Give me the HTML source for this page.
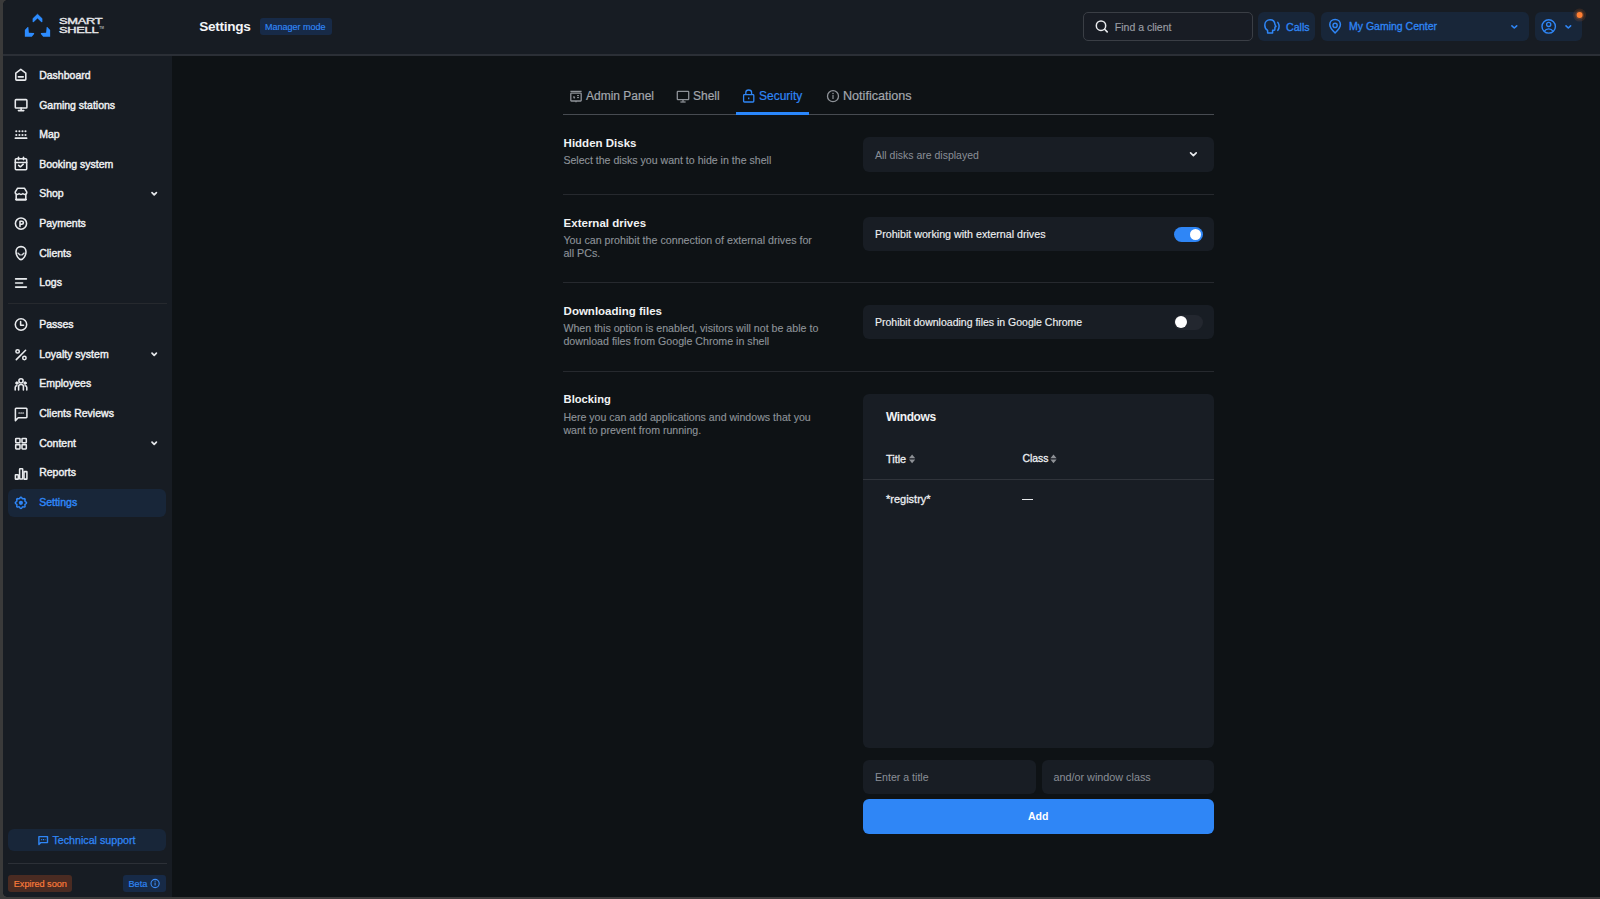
<!DOCTYPE html>
<html><head><meta charset="utf-8">
<style>
*{box-sizing:border-box;margin:0;padding:0}
html,body{width:1600px;height:899px;overflow:hidden;background:#3a3a3a;font-family:"Liberation Sans",sans-serif}
.a{position:absolute}
.t{position:absolute;white-space:nowrap;line-height:1}
svg{position:absolute;overflow:visible}
#app{left:3px;top:0;width:1597px;height:897px;background:#0e1215;border-radius:5px 0 0 5px;overflow:hidden}
#hdr{left:3px;top:0;width:1597px;height:54px;background:#171c23;border-top-left-radius:5px}
#hline{left:3px;top:54px;width:1597px;height:2px;background:#2b2f36}
#side{left:3px;top:56px;width:169px;height:841px;background:#171c23;border-bottom-left-radius:5px}
.nav{color:#eff1f3;font-size:10.5px;font-weight:400;-webkit-text-stroke:0.42px currentColor;left:39.2px}
.sb{-webkit-text-stroke:0.3px currentColor}
.sb2{-webkit-text-stroke:0.15px currentColor}
.sep{position:absolute;height:1px;background:#26292e}
.card{position:absolute;background:#181d24;border-radius:6px}
.h{color:#f1f2f4;font-weight:700;font-size:11.5px;left:563.6px}
.sub{color:#8d9299;font-size:10.6px;left:563.4px;line-height:12.9px;-webkit-text-stroke:0.12px currentColor}
.ct{color:#eef0f2;font-size:10.5px}
.ph{color:#8a8f97;font-size:10.6px}
.tab{color:#a3a7ad;font-size:12px;-webkit-text-stroke:0.2px currentColor}
</style></head>
<body>
<div id="app" class="a"></div>
<div id="hdr" class="a"></div>
<div id="hline" class="a"></div>
<div id="side" class="a"></div>

<!-- logo -->
<svg style="left:0;top:0" width="120" height="54" viewBox="0 0 120 54">
  <g fill="#2d8cff">
    <polygon points="32.8,18.5 37.5,13.9 42.2,18.5 42.2,21.9 41.4,21.9 37.5,18.2 33.6,21.9 32.8,21.9" stroke="#2d8cff" stroke-width="0.3" stroke-linejoin="round"/>
    <polygon points="24.85,29.9 27.7,27 28.3,27 28.9,32.7 34.1,33.1 34.1,33.9 31.8,36.8 24.85,36.8"/>
    <polygon points="50.15,29.9 47.3,27 46.7,27 46.1,32.7 40.9,33.1 40.9,33.9 43.2,36.8 50.15,36.8"/>
  </g>
</svg>
<div class="t" style="left:58.8px;top:15.9px;color:#e4e5e8;font-size:9.4px;font-weight:400;-webkit-text-stroke:0.4px currentColor;letter-spacing:-0.2px;transform:scaleX(1.37);transform-origin:0 0">SMART</div>
<div class="t" style="left:58.8px;top:25px;color:#e4e5e8;font-size:9.4px;font-weight:400;-webkit-text-stroke:0.4px currentColor;letter-spacing:-0.2px;transform:scaleX(1.37);transform-origin:0 0">SHELL</div>
<div class="t" style="left:99.3px;top:27.4px;color:#a6a8ac;font-size:3.2px;font-weight:700">TM</div>

<!-- header title -->
<div class="t" style="left:199.3px;top:20.1px;color:#f4f5f7;font-size:13.6px;font-weight:700;letter-spacing:-0.3px">Settings</div>
<div class="a" style="left:260px;top:18px;width:72px;height:17px;background:#172a47;border-radius:3px"></div>
<div class="t sb2" style="left:265px;top:22.6px;color:#3088f8;font-size:9px">Manager mode</div>

<!-- search -->
<div class="a" style="left:1083px;top:12px;width:170px;height:29px;border:1px solid #3a3e45;border-radius:5px;background:#181c24"></div>
<svg style="left:1090px;top:16px" width="24" height="20" viewBox="1090 16 24 20">
  <circle cx="1101" cy="25.7" r="4.7" fill="none" stroke="#e9ebee" stroke-width="1.5"/>
  <line x1="1104.6" y1="29.3" x2="1107.2" y2="31.9" stroke="#e9ebee" stroke-width="1.6" stroke-linecap="round"/>
</svg>
<div class="t sb2" style="left:1114.8px;top:21.5px;color:#9a9ea5;font-size:10.5px">Find a client</div>

<!-- calls -->
<div class="a" style="left:1258px;top:12.4px;width:57px;height:28.4px;background:#182639;border-radius:6px"></div>
<svg style="left:1260px;top:16px" width="24" height="20" viewBox="1260 16 24 20">
  <path d="M1267.6 33 V30.4 C1265.6 29.2 1264.8 27.3 1264.8 25.2 C1264.8 21.9 1267.1 19.8 1270.1 19.8 C1272.9 19.8 1274.7 21.9 1274.9 24.3 L1276 26.5 L1274.9 27.1 V29.2 C1274.9 29.9 1274.3 30.3 1273.6 30.3 H1272.6 V33 Z" fill="none" stroke="#2f86f6" stroke-width="1.5" stroke-linejoin="round"/>
  <path d="M1277.8 22.4 C1279.5 24.8 1279.5 27.8 1277.8 30.4" fill="none" stroke="#2f86f6" stroke-width="1.5" stroke-linecap="round"/>
</svg>
<div class="t sb" style="left:1286px;top:21.5px;color:#2f86f6;font-size:10.6px">Calls</div>

<!-- gaming center -->
<div class="a" style="left:1321px;top:12.4px;width:208px;height:28.4px;background:#182639;border-radius:6px"></div>
<svg style="left:1324px;top:14px" width="24" height="24" viewBox="1324 14 24 24">
  <path d="M1335.1 33 C1332.6 30.6 1329.8 28 1329.8 24.6 C1329.8 21.6 1332.2 19.4 1335.1 19.4 C1338 19.4 1340.4 21.6 1340.4 24.6 C1340.4 28 1337.6 30.6 1335.1 33 Z" fill="none" stroke="#2f86f6" stroke-width="1.5" stroke-linejoin="round"/>
  <circle cx="1335.1" cy="25.4" r="2.1" fill="none" stroke="#2f86f6" stroke-width="1.4"/>
</svg>
<div class="t sb" style="left:1349px;top:21.4px;color:#2f86f6;font-size:10.5px">My Gaming Center</div>
<svg style="left:1505px;top:20px" width="14" height="14" viewBox="1505 20 14 14">
  <polyline points="1511.9,25.8 1514.3,28 1516.7,25.8" fill="none" stroke="#2f86f6" stroke-width="1.6" stroke-linecap="round" stroke-linejoin="round"/>
</svg>

<!-- user -->
<div class="a" style="left:1535px;top:12.4px;width:47px;height:28.4px;background:#182639;border-radius:6px"></div>
<svg style="left:1536px;top:8px" width="54" height="30" viewBox="1536 8 54 30">
  <circle cx="1548.7" cy="26.4" r="6.7" fill="none" stroke="#2f86f6" stroke-width="1.4"/>
  <circle cx="1548.7" cy="24.4" r="2.1" fill="none" stroke="#2f86f6" stroke-width="1.3"/>
  <path d="M1544.2 31.4 C1545.5 29.6 1547 28.9 1548.7 28.9 C1550.4 28.9 1551.9 29.6 1553.2 31.4" fill="none" stroke="#2f86f6" stroke-width="1.4"/>
  <polyline points="1566,25.8 1568.3,28 1570.6,25.8" fill="none" stroke="#2f86f6" stroke-width="1.6" stroke-linecap="round" stroke-linejoin="round"/>
  <circle cx="1579.6" cy="15.1" r="6.5" fill="#ff7a2a" opacity="0.12"/><circle cx="1579.6" cy="15.1" r="4.5" fill="#ff7a2a" opacity="0.2"/>
  <circle cx="1579.6" cy="15.1" r="3" fill="#ff7f33"/>
</svg>

<!-- SIDEBAR -->
<div id="navtexts"></div>
<div class="t nav" style="top:70.0px">Dashboard</div>
<div class="t nav" style="top:99.6px">Gaming stations</div>
<div class="t nav" style="top:129.2px">Map</div>
<div class="t nav" style="top:158.8px">Booking system</div>
<div class="t nav" style="top:188.4px">Shop</div>
<div class="t nav" style="top:218.0px">Payments</div>
<div class="t nav" style="top:247.6px">Clients</div>
<div class="t nav" style="top:277.2px">Logs</div>
<div class="sep" style="left:8px;top:303px;width:159px"></div>
<div class="t nav" style="top:318.9px">Passes</div>
<div class="t nav" style="top:348.6px">Loyalty system</div>
<div class="t nav" style="top:378.3px">Employees</div>
<div class="t nav" style="top:408.0px">Clients Reviews</div>
<div class="t nav" style="top:437.7px">Content</div>
<div class="t nav" style="top:467.4px">Reports</div>
<div class="a" style="left:8px;top:489px;width:158px;height:28px;background:#182639;border-radius:6px"></div>
<div class="t nav" style="top:497.1px;color:#2f86f6">Settings</div>

<svg style="left:0;top:56px" width="172" height="480" viewBox="0 56 172 480">
  <g fill="none" stroke="#e9ebee" stroke-width="1.55" stroke-linejoin="round" stroke-linecap="round">
    <!-- dashboard -->
    <path d="M15.8 73.1 L20.8 69.4 L25.8 73.1 V79.2 C25.8 79.7 25.4 80.1 24.9 80.1 H16.7 C16.2 80.1 15.8 79.7 15.8 79.2 Z"/>
    <line x1="18.4" y1="76.8" x2="23.2" y2="76.8" stroke-width="1.7"/>
    <!-- monitor -->
    <rect x="15.3" y="99.6" width="11.6" height="8.4" rx="0.8"/>
    <line x1="21.1" y1="108" x2="21.1" y2="110.2"/>
    <line x1="18.4" y1="110.6" x2="23.8" y2="110.6"/>
    <!-- map -->
    <line x1="15.4" y1="138.2" x2="26.6" y2="138.2" stroke-width="1.7"/>
    <!-- booking -->
    <rect x="15.3" y="158.8" width="11.4" height="10.9" rx="1"/>
    <line x1="15.3" y1="162.4" x2="26.7" y2="162.4"/>
    <line x1="18.5" y1="157.2" x2="18.5" y2="159.6"/>
    <line x1="23.5" y1="157.2" x2="23.5" y2="159.6"/>
    <polyline points="18.6,165.3 20.4,166.8 23.3,164.2"/>
    <!-- shop -->
    <path d="M17.6 188.2 H24.4 L26.8 192.2 C26.8 193.6 25.9 194.4 24.7 194.4 C23.5 194.4 22.9 193.6 22.9 193.6 C22.9 193.6 22.3 194.4 21 194.4 C19.7 194.4 19.1 193.6 19.1 193.6 C19.1 193.6 18.5 194.4 17.3 194.4 C16.1 194.4 15.2 193.6 15.2 192.2 Z"/>
    <path d="M16.2 194.4 V199.6 H25.8 V194.4"/>
    <line x1="15.8" y1="199.6" x2="26.2" y2="199.6" stroke-width="1.6"/>
    <!-- payments -->
    <circle cx="21" cy="223.6" r="5.6"/>
    <path d="M20 226.6 V221.2 H21.8 C22.8 221.2 23.4 221.9 23.4 222.7 C23.4 223.5 22.8 224.2 21.8 224.2 H20"/>
    <!-- clients alien -->
    <path d="M21 246.6 C24 246.6 26 248.8 26 251.8 C26 255.6 23.2 259.6 21 259.6 C18.8 259.6 16 255.6 16 251.8 C16 248.8 18 246.6 21 246.6 Z"/>
    <path d="M18 253.2 C19.2 253.4 20.2 254.2 20.4 255.2 C19.2 255 18.2 254.2 18 253.2 Z" fill="#e6e8eb" stroke-width="0.9"/>
    <path d="M24 253.2 C22.8 253.4 21.8 254.2 21.6 255.2 C22.8 255 23.8 254.2 24 253.2 Z" fill="#e6e8eb" stroke-width="0.9"/>
    <!-- logs -->
    <line x1="15.6" y1="278.9" x2="26.4" y2="278.9" stroke-width="1.6"/>
    <line x1="15.6" y1="283" x2="22.6" y2="283" stroke-width="1.6"/>
    <line x1="15.6" y1="287.1" x2="26.4" y2="287.1" stroke-width="1.6"/>
    <!-- passes clock -->
    <circle cx="21" cy="324.5" r="5.7"/>
    <polyline points="20.6,321.4 20.6,325.3 23.5,325.3"/>
    <!-- loyalty % -->
    <circle cx="17.6" cy="351.4" r="1.7"/>
    <circle cx="24.4" cy="358" r="1.7"/>
    <line x1="16.3" y1="359.6" x2="25.6" y2="350.2"/>
    <!-- employees -->
    <circle cx="21" cy="380.8" r="2.1"/>
    <path d="M18.6 390 V386.6 C18.6 385.2 19.7 384.4 21 384.4 C22.3 384.4 23.4 385.2 23.4 386.6 V390"/>
    <circle cx="16.9" cy="383.1" r="1.3" fill="#e6e8eb" stroke-width="0.8"/>
    <circle cx="25.1" cy="383.1" r="1.3" fill="#e6e8eb" stroke-width="0.8"/>
    <path d="M15.2 390 V387.4 C15.2 386.4 15.9 385.8 16.9 385.8"/>
    <path d="M26.8 390 V387.4 C26.8 386.4 26.1 385.8 25.1 385.8"/>
    <!-- reviews -->
    <path d="M15.4 420.6 V409.1 C15.4 408.7 15.7 408.3 16.1 408.3 H26.2 C26.6 408.3 26.9 408.7 26.9 409.1 V417 C26.9 417.4 26.6 417.7 26.2 417.7 H18.2 Z"/>
    <line x1="18.8" y1="413" x2="23.6" y2="413" stroke-dasharray="0.9 1.1" stroke-width="1.1"/>
    <!-- content grid -->
    <rect x="15.7" y="438.5" width="4.3" height="4.3" rx="0.6"/>
    <rect x="22" y="438.5" width="4.3" height="4.3" rx="0.6"/>
    <rect x="15.7" y="444.6" width="4.3" height="4.3" rx="0.6"/>
    <rect x="22" y="444.6" width="4.3" height="4.3" rx="0.6"/>
    <!-- reports -->
    <rect x="15.4" y="474.7" width="2.9" height="4.4" rx="0.4"/>
    <rect x="19.6" y="468.8" width="3.1" height="10.3" rx="0.6"/>
    <rect x="24" y="471.6" width="2.9" height="7.5" rx="0.4"/>
  </g>
  <g fill="#e6e8eb">
    <circle cx="16.3" cy="131.3" r="1.05"/><circle cx="19.4" cy="131.3" r="1.05"/><circle cx="22.5" cy="131.3" r="1.05"/><circle cx="25.5" cy="131.3" r="1.05"/>
    <circle cx="16.3" cy="135" r="1.05"/><circle cx="19.4" cy="135" r="1.05"/><circle cx="22.5" cy="135" r="1.05"/><circle cx="25.5" cy="135" r="1.05"/>
  </g>
  <g fill="none" stroke="#e6e8eb" stroke-width="1.7" stroke-linecap="round" stroke-linejoin="round">
    <polyline points="152,192.7 154.2,194.9 156.4,192.7"/>
    <polyline points="152,353.2 154.2,355.4 156.4,353.2"/>
    <polyline points="152,442.2 154.2,444.4 156.4,442.2"/>
  </g>
  <!-- settings gear -->
  <g fill="none" stroke="#2f86f6" stroke-width="1.5">
    <path d="M20.90 497.20 L21.26 497.29 L21.59 497.55 L21.88 497.90 L22.12 498.26 L22.34 498.56 L22.58 498.73 L22.88 498.78 L23.25 498.73 L23.68 498.64 L24.13 498.60 L24.54 498.65 L24.86 498.84 L25.05 499.16 L25.10 499.57 L25.06 500.02 L24.97 500.45 L24.92 500.82 L24.97 501.12 L25.14 501.36 L25.44 501.58 L25.80 501.82 L26.15 502.11 L26.41 502.44 L26.50 502.80 L26.41 503.16 L26.15 503.49 L25.80 503.78 L25.44 504.02 L25.14 504.24 L24.97 504.48 L24.92 504.78 L24.97 505.15 L25.06 505.58 L25.10 506.03 L25.05 506.44 L24.86 506.76 L24.54 506.95 L24.13 507.00 L23.68 506.96 L23.25 506.87 L22.88 506.82 L22.58 506.87 L22.34 507.04 L22.12 507.34 L21.88 507.70 L21.59 508.05 L21.26 508.31 L20.90 508.40 L20.54 508.31 L20.21 508.05 L19.92 507.70 L19.68 507.34 L19.46 507.04 L19.22 506.87 L18.92 506.82 L18.55 506.87 L18.12 506.96 L17.67 507.00 L17.26 506.95 L16.94 506.76 L16.75 506.44 L16.70 506.03 L16.74 505.58 L16.83 505.15 L16.88 504.78 L16.83 504.48 L16.66 504.24 L16.36 504.02 L16.00 503.78 L15.65 503.49 L15.39 503.16 L15.30 502.80 L15.39 502.44 L15.65 502.11 L16.00 501.82 L16.36 501.58 L16.66 501.36 L16.83 501.12 L16.88 500.82 L16.83 500.45 L16.74 500.02 L16.70 499.57 L16.75 499.16 L16.94 498.84 L17.26 498.65 L17.67 498.60 L18.12 498.64 L18.55 498.73 L18.92 498.78 L19.22 498.73 L19.46 498.56 L19.68 498.26 L19.92 497.90 L20.21 497.55 L20.54 497.29 Z" stroke-linejoin="round"/>
    <circle cx="20.9" cy="502.8" r="2.1" fill="#2f86f6" stroke="none"/>
  </g>
</svg>

<!-- sidebar bottom -->
<div class="a" style="left:8px;top:829px;width:158px;height:22px;background:#182639;border-radius:6px"></div>
<svg style="left:36px;top:833px" width="14" height="14" viewBox="36 833 14 14">
  <path d="M38.9 844.6 V836.6 H47.5 V842.6 H40.9 Z" fill="none" stroke="#2f86f6" stroke-width="1.4" stroke-linejoin="round"/>
  <line x1="41.2" y1="839.6" x2="45.4" y2="839.6" stroke="#2f86f6" stroke-width="1.2" stroke-dasharray="1 0.8"/>
</svg>
<div class="t" style="left:52.4px;top:835px;color:#2f86f6;font-size:10.7px;-webkit-text-stroke:0.25px currentColor">Technical support</div>
<div class="sep" style="left:8px;top:863px;width:159px;background:#2c3037"></div>
<div class="a" style="left:8px;top:875px;width:64px;height:17px;background:#4a2b22;border-radius:3px"></div>
<div class="t sb2" style="left:13.8px;top:879.6px;color:#ff7d3b;font-size:9.2px;letter-spacing:-0.05px">Expired soon</div>
<div class="a" style="left:123px;top:875px;width:43px;height:17px;background:#172a47;border-radius:3px"></div>
<div class="t sb2" style="left:128.4px;top:879.6px;color:#3088f8;font-size:9.2px">Beta</div>
<svg style="left:148px;top:877px" width="14" height="14" viewBox="148 877 14 14">
  <circle cx="155.1" cy="883.5" r="4.1" fill="none" stroke="#3a8bf5" stroke-width="1.1"/>
  <line x1="155.1" y1="882.6" x2="155.1" y2="885.6" stroke="#3a8bf5" stroke-width="1.1"/>
  <circle cx="155.1" cy="881.2" r="0.6" fill="#3a8bf5"/>
</svg>

<!-- MAIN -->
<!-- tabs -->
<div class="sep" style="left:563px;top:114px;width:651px;height:1px;background:#474b51"></div>
<div class="a" style="left:736px;top:112px;width:73px;height:2.8px;background:#2a87fc"></div>
<svg style="left:560px;top:84px" width="360" height="24" viewBox="560 84 360 24">
  <g fill="none" stroke="#8e9298" stroke-width="1.3" stroke-linejoin="round">
    <line x1="570.4" y1="91.4" x2="581.6" y2="91.4"/>
    <rect x="570.8" y="93.2" width="10.4" height="7.8" rx="0.5"/>
    <line x1="573.6" y1="96.4" x2="574.6" y2="98.4" stroke-width="1.5"/>
    <line x1="577" y1="95.6" x2="579" y2="95.6" stroke-width="1"/>
    <line x1="577" y1="97.6" x2="579" y2="97.6" stroke-width="1"/>
    <line x1="576" y1="101" x2="576" y2="102.3"/>
    <rect x="677.3" y="91.3" width="11.4" height="8.4" rx="0.6"/>
    <line x1="683" y1="99.7" x2="683" y2="101.8"/>
    <line x1="680.4" y1="102" x2="685.6" y2="102"/>
    <circle cx="833" cy="96.2" r="5.5"/>
    <line x1="833" y1="95" x2="833" y2="99" stroke-width="1.2"/>
    <circle cx="833" cy="93.5" r="0.5" stroke-width="0.8"/>
  </g>
  <g fill="none" stroke="#2f86f6" stroke-width="1.3" stroke-linejoin="round">
    <rect x="743.6" y="94.6" width="10.2" height="7.4" rx="0.8"/>
    <path d="M745.8 94.6 V92.6 C745.8 91 747.1 90 748.7 90 C750.3 90 751.6 91 751.6 92.6 V94.6"/>
    <line x1="748.7" y1="97.6" x2="748.7" y2="99.2" stroke-width="1.4"/>
  </g>
</svg>
<div class="t tab" style="left:586px;top:90.2px">Admin Panel</div>
<div class="t tab" style="left:693px;top:90.2px">Shell</div>
<div class="t tab" style="left:759px;top:90.2px;color:#2f86f6">Security</div>
<div class="t tab" style="left:843px;top:90.2px;font-size:12.6px;top:89.8px">Notifications</div>

<!-- hidden disks -->
<div class="t h" style="top:137.8px">Hidden Disks</div>
<div class="t sub" style="top:153.8px">Select the disks you want to hide in the shell</div>
<div class="card" style="left:863px;top:137.2px;width:351px;height:34.5px"></div>
<div class="t ph" style="left:875px;top:149.8px;font-size:10.5px">All disks are displayed</div>
<svg style="left:1185px;top:148px" width="16" height="12" viewBox="1185 148 16 12">
  <polyline points="1190.6,152.9 1193.4,155.6 1196.2,152.9" fill="none" stroke="#e9ebee" stroke-width="1.7" stroke-linecap="round" stroke-linejoin="round"/>
</svg>
<div class="sep" style="left:563px;top:194px;width:651px"></div>

<!-- external drives -->
<div class="t h" style="top:217.5px">External drives</div>
<div class="t sub" style="top:233.7px;white-space:normal;width:260px;font-size:10.7px">You can prohibit the connection of external drives for all PCs.</div>
<div class="card" style="left:863px;top:217.2px;width:351px;height:34px"></div>
<div class="t ct sb2" style="left:875px;top:229.1px;font-size:10.7px">Prohibit working with external drives</div>
<div class="a" style="left:1174px;top:226.5px;width:29px;height:15px;background:#2f86f6;border-radius:8px"></div>
<div class="a" style="left:1189.8px;top:228.6px;width:11.2px;height:11.2px;background:#ffffff;border-radius:50%"></div>
<div class="sep" style="left:563px;top:282px;width:651px"></div>

<!-- downloading -->
<div class="t h" style="top:305.7px">Downloading files</div>
<div class="t sub" style="top:321.7px;white-space:normal;width:270px;font-size:10.65px">When this option is enabled, visitors will not be able to download files from Google Chrome in shell</div>
<div class="card" style="left:863px;top:304.8px;width:351px;height:34.6px"></div>
<div class="t ct sb2" style="left:875px;top:317.1px;font-size:10.5px">Prohibit downloading files in Google Chrome</div>
<div class="a" style="left:1174px;top:314.5px;width:29px;height:15px;background:#23272f;border-radius:8px"></div>
<div class="a" style="left:1175.2px;top:316.2px;width:12px;height:12px;background:#ffffff;border-radius:50%"></div>
<div class="sep" style="left:563px;top:371px;width:651px"></div>

<!-- blocking -->
<div class="t h" style="top:394.2px;font-size:11.2px">Blocking</div>
<div class="t sub" style="top:410.8px;white-space:normal;width:265px">Here you can add applications and windows that you want to prevent from running.</div>
<div class="card" style="left:863px;top:394px;width:351px;height:354.3px"></div>
<div class="t" style="left:886px;top:410.8px;color:#f1f2f4;font-size:12px;font-weight:700;letter-spacing:-0.4px">Windows</div>
<div class="t sb" style="left:886px;top:453.8px;color:#eceef1;font-size:10.9px">Title</div>
<div class="t sb" style="left:1022.5px;top:454.2px;color:#eceef1;font-size:10.4px">Class</div>
<svg style="left:905px;top:450px" width="160" height="20" viewBox="905 450 160 20">
  <g fill="#8e9196">
    <polygon points="909,458.3 912.1,454.4 915.2,458.3"/>
    <polygon points="909,459.6 912.1,463.3 915.2,459.6"/>
    <polygon points="1050.4,458.3 1053.5,454.4 1056.6,458.3"/>
    <polygon points="1050.4,459.6 1053.5,463.3 1056.6,459.6"/>
  </g>
</svg>
<div class="sep" style="left:863px;top:479px;width:351px;background:#30343b"></div>
<div class="t sb" style="left:886px;top:493.8px;color:#eceef1;font-size:11px">*registry*</div>
<div class="a" style="left:1022px;top:498.6px;width:11px;height:1.4px;background:#e6e8eb"></div>

<!-- inputs -->
<div class="card" style="left:863px;top:760px;width:173px;height:33.5px"></div>
<div class="card" style="left:1042px;top:760px;width:172px;height:33.5px"></div>
<div class="t ph" style="left:875px;top:771.5px">Enter a title</div>
<div class="t ph" style="left:1053.5px;top:771.5px;font-size:10.8px">and/or window class</div>
<div class="a" style="left:863px;top:799px;width:351px;height:35px;background:#2f86f6;border-radius:6px"></div>
<div class="t" style="left:1028px;top:811px;color:#ffffff;font-size:10.5px;font-weight:700">Add</div>
</body></html>
